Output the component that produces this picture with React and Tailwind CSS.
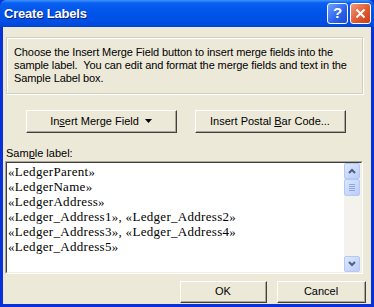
import React from "react";

const ui = { fontFamily: '"Liberation Sans", Arial, sans-serif' };
const serif = { fontFamily: '"Liberation Serif", "Times New Roman", serif' };

function Btn({ className = "", children }) {
  return (
    <div
      className={
        "flex items-center justify-center border-t border-l border-white border-r border-b border-r-[#404040] border-b-[#404040] bg-[#ECE9D8] text-[11px] text-black " +
        className
      }
      style={ui}
    >
      <div className="flex h-full w-full items-center justify-center border-r border-b border-r-[#ACA899] border-b-[#ACA899]">
        {children}
      </div>
    </div>
  );
}

function ScrollBtn({ up }) {
  return (
    <div className="flex h-[16px] w-[16px] items-center justify-center rounded-[2px] border border-[#B4C8F6] bg-[linear-gradient(135deg,#DCE6FD,#BBCDF9)]">
      <svg width="8" height="6" viewBox="0 0 8 6">
        {up ? (
          <path d="M1 5 L4 2 L7 5" stroke="#4D6185" strokeWidth="2" fill="none" />
        ) : (
          <path d="M1 1 L4 4 L7 1" stroke="#4D6185" strokeWidth="2" fill="none" />
        )}
      </svg>
    </div>
  );
}

export default function App() {
  const lines = [
    "«LedgerParent»",
    "«LedgerName»",
    "«LedgerAddress»",
    "«Ledger_Address1», «Ledger_Address2»",
    "«Ledger_Address3», «Ledger_Address4»",
    "«Ledger_Address5»",
  ];
  return (
    <div className="flex h-[307px] w-[374px] flex-col overflow-hidden bg-[#0831D9]">
      {/* title bar */}
      <div className="flex h-[27px] items-center justify-between rounded-t-[6px] bg-[linear-gradient(to_bottom,#3D95FF_0px,#0A5FF0_3px,#0055EA_12px,#0050E6_20px,#0046D8_27px)] pl-[4px] pr-[3px]">
        <span
          className="text-[13px] font-bold tracking-[-0.2px] text-white [text-shadow:1px_1px_0_#0A1E80]"
          style={ui}
        >
          Create Labels
        </span>
        <div className="flex gap-[2px]">
          <div className="flex h-[21px] w-[21px] items-center justify-center rounded-[3px] border border-white bg-[linear-gradient(135deg,#6FA0FF,#2A62EA_60%,#1B4DD8)] text-[15px] font-bold text-white" style={ui}>
            ?
          </div>
          <div className="flex h-[21px] w-[21px] items-center justify-center rounded-[3px] border border-white bg-[linear-gradient(135deg,#F09A7C,#E15A2F_55%,#C4401A)]">
            <svg width="11" height="11" viewBox="0 0 11 11">
              <path d="M1.5 1.5 L9.5 9.5 M9.5 1.5 L1.5 9.5" stroke="white" strokeWidth="2" />
            </svg>
          </div>
        </div>
      </div>

      {/* body */}
      <div className="mx-[3px] mb-[3px] flex flex-1 flex-col bg-[#ECE9D8]" style={ui}>
        {/* group box */}
        <div className="ml-[3px] mr-[8px] mt-[10px] h-[57px] border border-[#D0D0BF] shadow-[inset_1px_1px_0_#fff,1px_1px_0_#fff]">
          <p className="px-[7px] pt-[8px] text-[11px] leading-[13px] tracking-[-0.1px] text-black">
            Choose the Insert Merge Field button to insert merge fields into the sample label.&nbsp; You can edit and format the merge fields and text in the Sample Label box.
          </p>
        </div>

        {/* buttons row */}
        <div className="mt-[16px] flex gap-[18px] pl-[23px]">
          <Btn className="h-[23px] w-[151px]">
            <span>
              In<span className="underline">s</span>ert Merge Field
            </span>
            <svg width="7" height="4" viewBox="0 0 7 4" className="ml-[6px]">
              <path d="M0 0 H7 L3.5 4 Z" fill="black" />
            </svg>
          </Btn>
          <Btn className="h-[23px] w-[151px]">
            <span>
              Insert Postal <span className="underline">B</span>ar Code...
            </span>
          </Btn>
        </div>

        {/* label */}
        <div className="mt-[14px] pl-[3px] text-[11px] leading-[13px] text-black">
          Sam<span className="underline">p</span>le label:
        </div>

        {/* text box */}
        <div className="ml-[2px] mr-[8px] mt-[1px] flex h-[113px] border-t border-l border-r border-b border-t-[#ACA899] border-l-[#ACA899] border-r-white border-b-white">
          <div className="flex flex-1 border-t border-l border-r border-b border-t-[#404040] border-l-[#404040] border-r-[#F1EFE2] border-b-[#F1EFE2] bg-white">
            <div className="flex-1 pl-[1px] pt-[1px] text-[13px] leading-[15px] text-black" style={serif}>
              {lines.map((l) => (
                <div key={l} className="whitespace-nowrap tracking-[0.3px]">
                  {l}
                </div>
              ))}
            </div>
            <div className="flex w-[17px] flex-col bg-[#F4F2EC]">
              <ScrollBtn up />
              <div className="flex h-[17px] w-[16px] items-center justify-center rounded-[2px] border border-[#B4C8F6] bg-[linear-gradient(135deg,#DCE6FD,#BBCDF9)]">
                <div className="flex flex-col gap-[1px]">
                  <div className="h-[1px] w-[6px] bg-[#8EA8E6]" />
                  <div className="h-[1px] w-[6px] bg-[#8EA8E6]" />
                  <div className="h-[1px] w-[6px] bg-[#8EA8E6]" />
                  <div className="h-[1px] w-[6px] bg-[#8EA8E6]" />
                </div>
              </div>
              <div className="flex-1" />
              <ScrollBtn />
            </div>
          </div>
        </div>

        {/* bottom buttons */}
        <div className="mt-[7px] flex justify-end gap-[10px] pr-[5px]">
          <Btn className="h-[22px] w-[87px]">OK</Btn>
          <Btn className="h-[22px] w-[89px]">Cancel</Btn>
        </div>
      </div>
    </div>
  );
}
